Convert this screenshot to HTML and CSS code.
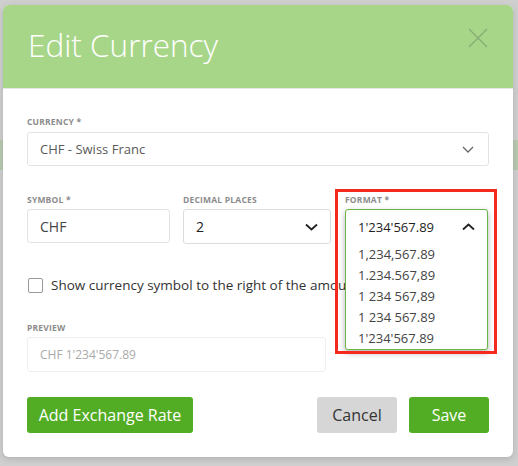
FILE: index.html
```html
<!DOCTYPE html>
<html>
<head>
<meta charset="utf-8">
<link rel="stylesheet" href="styles.css">
</head>
<body>
<div class="modal">
  <div class="header">
    <h1 class="title">Edit Currency</h1>
    <svg class="close" width="20" height="20" viewBox="0 0 20 20"><path d="M1 1 L19 19 M19 1 L1 19" stroke="#86ad72" stroke-width="1.3" fill="none"/></svg>
  </div>
  <div class="body">
    <div class="field">
      <div class="label">Currency *</div>
      <div class="input select">
        <span>CHF - Swiss Franc</span>
        <svg class="chev" width="12" height="7" viewBox="0 0 12 7"><path d="M1 1 L6 6 L11 1" stroke="#666" stroke-width="1.3" fill="none"/></svg>
      </div>
    </div>
    <div class="row">
      <div class="field">
        <div class="label">Symbol *</div>
        <div class="input big">CHF</div>
      </div>
      <div class="field">
        <div class="label">Decimal places</div>
        <div class="input select dec">
          <span>2</span>
          <svg class="chev" width="13" height="8" viewBox="0 0 13 8"><path d="M1 1.5 L6.5 6.5 L12 1.5" stroke="#222" stroke-width="1.8" fill="none"/></svg>
        </div>
      </div>
      <div class="field fmt">
        <div class="label">Format *</div>
        <div class="dropdown">
          <div class="dd-head">
            <span>1'234'567.89</span>
            <svg width="13" height="8" viewBox="0 0 13 8"><path d="M1 6.5 L6.5 1.5 L12 6.5" stroke="#222" stroke-width="1.8" fill="none"/></svg>
          </div>
          <ul class="options">
            <li>1,234,567.89</li>
            <li>1.234.567,89</li>
            <li>1 234 567,89</li>
            <li>1 234 567.89</li>
            <li>1'234'567.89</li>
          </ul>
        </div>
        <div class="highlight"></div>
      </div>
    </div>
    <label class="check">
      <span class="box"></span>
      <span class="check-text">Show currency symbol to the right of the amount</span>
    </label>
    <div class="field preview">
      <div class="label">Preview</div>
      <div class="input disabled">CHF 1'234'567.89</div>
    </div>
    <div class="actions">
      <button class="btn green">Add Exchange Rate</button>
      <div class="right">
        <button class="btn gray">Cancel</button>
        <button class="btn green save">Save</button>
      </div>
    </div>
  </div>
</div>
</body>
</html>
```
FILE: styles.css
```css
* { box-sizing: border-box; }
html, body { margin: 0; padding: 0; }
body {
  width: 518px;
  height: 466px;
  overflow: hidden;
  font-family: "Open Sans", "Noto Sans", sans-serif;
  background:
    linear-gradient(to bottom, transparent 0, transparent 140px, #b9c9b0 140px, #b9c9b0 170px, transparent 170px),
    #cfcfcf;
  padding: 5px 5px 9px 3px;
}
.modal {
  width: 510px;
  height: 452px;
  background: #fff;
  border-radius: 6px;
  overflow: hidden;
  box-shadow: 0 2px 6px rgba(0,0,0,0.15);
}
.header {
  height: 84px;
  background: #a8d689;
  border-bottom: 1px solid #e6e6e6;
  display: flex;
  justify-content: space-between;
  align-items: flex-start;
  padding: 0 25px 0 25px;
}
.title {
  margin: 16px 0 0 0;
  font-weight: 300;
  font-size: 31.5px;
  line-height: 48px;
  color: #fff;
}
.close { margin-top: 23px; }
.body {
  padding: 27px 24px 24px 24px;
}
.field { display: flex; flex-direction: column; }
.label {
  font-size: 8.5px;
  font-weight: 700;
  line-height: 12px;
  color: #8c8c8c;
  text-transform: uppercase;
  letter-spacing: 0.2px;
  margin-bottom: 4px;
}
.input {
  height: 34px;
  border: 1px solid #e3e3e3;
  border-radius: 3px;
  display: flex;
  align-items: center;
  padding: 0 12px;
  font-size: 13px;
  color: #5a5a5a;
  background: #fff;
}
.select { justify-content: space-between; }
.select .chev { margin-right: 2px; }
.big { font-size: 14px; color: #444; }
.row {
  margin-top: 28px;
  display: grid;
  grid-template-columns: 143px 148px 144px;
  column-gap: 13px;
  position: relative;
}
.row .label { margin-bottom: 3px; }
.dec { height: 35px; font-size: 14px; color: #222; border-color: #dcdcdc; }
.dec .chev { margin-right: 0; }
.fmt { position: relative; margin-left: 1px; }
.dropdown {
  position: absolute;
  top: 15px;
  left: 0;
  width: 143px;
  height: 141px;
  background: #fff;
  border: 1px solid #6ab545;
  border-radius: 3px;
  box-shadow: 0 3px 6px rgba(0,0,0,0.3);
  z-index: 2;
}
.dd-head {
  height: 34px;
  display: flex;
  justify-content: space-between;
  align-items: center;
  padding: 0 12px 0 12px;
  font-size: 13px;
  color: #1e1e1e;
}
.options {
  list-style: none;
  margin: 0;
  padding: 0;
}
.options li {
  height: 21px;
  line-height: 21px;
  padding-left: 12px;
  font-size: 13px;
  color: #444;
}
.highlight {
  position: absolute;
  top: -5px;
  left: -10px;
  width: 162px;
  height: 165px;
  border: 3.5px solid #f52a1f;
  z-index: 3;
  pointer-events: none;
}
.check {
  margin-top: 31px;
  display: flex;
  align-items: center;
  height: 20px;
  white-space: nowrap;
}
.box {
  width: 15px;
  height: 15px;
  border: 1.5px solid #999;
  border-radius: 2px;
  margin: 0 8px 0 1px;
  flex: none;
}
.check-text { font-size: 13.5px; color: #333; }
.preview { margin-top: 27px; width: 299px; }
.preview .label { margin-bottom: 3px; }
.disabled { height: 35px; color: #aaa; border-color: #efefef; font-size: 12px; }
.actions {
  margin-top: 25px;
  display: flex;
  justify-content: space-between;
}
.right { display: flex; gap: 12px; }
.btn {
  height: 36px;
  border: none;
  border-radius: 3px;
  font-family: "Open Sans", "Noto Sans", sans-serif;
  font-size: 16px;
  padding: 0;
  cursor: pointer;
}
.green { background: #53ad24; color: #fff; width: 166px; }
.gray { background: #d6d6d6; color: #333; width: 80px; }
.save { width: 80px; }
```
